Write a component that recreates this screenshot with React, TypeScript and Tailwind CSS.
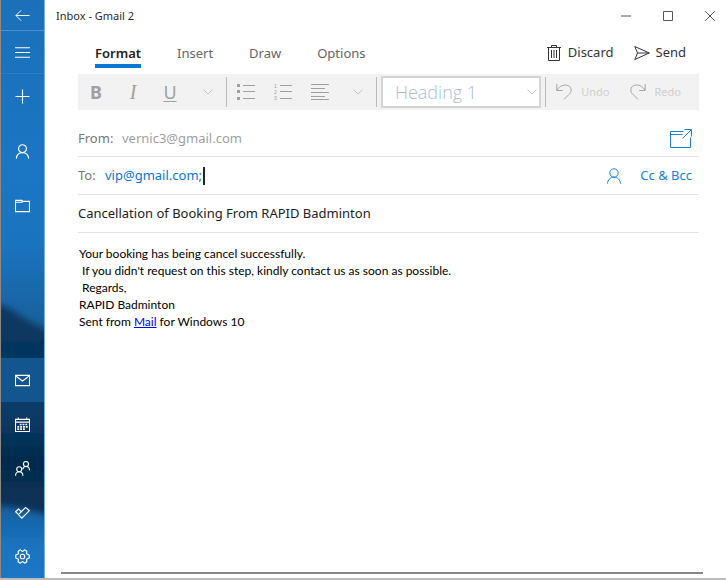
import { useState } from 'react'
import type { ReactNode } from 'react'

interface IconProps {
  className?: string
  children: ReactNode
}

function Icon({ className = 'size-4', children }: IconProps) {
  return (
    <svg viewBox="0 0 16 16" fill="none" stroke="currentColor" className={className} aria-hidden="true">
      {children}
    </svg>
  )
}

const personPath = (
  <>
    <circle cx="8" cy="5" r="4.2" />
    <path d="M1.4 15.6C1.8 11.8 4.3 9.2 8 9.2s6.2 2.6 6.6 6.4" />
  </>
)

const chevron = (
  <svg viewBox="0 0 10 6" fill="none" stroke="currentColor" className="h-1.5 w-2.5" aria-hidden="true">
    <path d="M.5.5 5 5 9.5.5" />
  </svg>
)

const topItems = [
  { label: 'New mail', icon: <path d="M8 .5v15M.5 8h15" /> },
  { label: 'Accounts', icon: personPath },
  { label: 'Folders', icon: <path d="M.5 1.5h7v2h-7zM7.5 2.5h8v11H.5v-10" /> },
]

const appItems = [
  { label: 'Mail', active: true, icon: <path d="M.5 2.5h15v11H.5zM.5 3 8 8.5 15.5 3" /> },
  {
    label: 'Calendar',
    icon: (
      <>
        <path d="M.5 2.5h15v13H.5zM.5 5.5h15M3.5.5v2M12.5.5v2" />
        <path d="M5 8h9M2.5 10.5H14M2.5 13H11" strokeWidth="1.8" strokeDasharray="2 1" />
      </>
    ),
  },
  {
    label: 'People',
    icon: (
      <>
        <circle cx="4.5" cy="8.8" r="2.7" />
        <path d="M.6 15.8c0-2.8 1.5-4.3 3.9-4.3s3.9 1.5 3.9 4.3" />
        <circle cx="11.7" cy="3.2" r="2.7" />
        <path d="M8.2 9c.3-2 1.5-3.1 3.5-3.1 2.3 0 3.7 1.5 3.8 4.1" />
      </>
    ),
  },
  { label: 'To Do', icon: <path d="m3.7 4.2 3 3-3 3-3-3zM6.7 7.2l4.6-4.6 4 3.500-8 8-3.600-3.900" /> },
  {
    label: 'Settings',
    icon: (
      <>
        <path
          strokeLinejoin="round"
          d="M5.700.9 8 2.600 10.300.9l2.400 1.400-.4 2.800 2.900 1.200v3.400l-2.900 1.200.4 2.800-2.400 1.400L8 13.400l-2.300 1.700-2.400-1.400.4-2.800L.8 9.700V6.300l2.900-1.200-.4-2.800z"
        />
        <circle cx="8" cy="8" r="2.4" />
      </>
    ),
  },
]

const tabs = ['Format', 'Insert', 'Draw', 'Options']

function Wallpaper() {
  return (
    <svg viewBox="0 0 44 578" preserveAspectRatio="none" className="absolute inset-0 size-full" aria-hidden="true">
      <defs>
        <linearGradient id="sky" x1="0" y1="0" x2="0" y2="1">
          <stop offset="0" stopColor="#1b70b9" />
          <stop offset=".3" stopColor="#1b76c4" />
          <stop offset=".43" stopColor="#1a73bd" />
          <stop offset=".55" stopColor="#19629f" />
        </linearGradient>
        <linearGradient id="hill" x1="0" y1="0" x2="0" y2="1">
          <stop offset="0" stopColor="#0c3a63" />
          <stop offset=".2" stopColor="#063660" />
          <stop offset=".5" stopColor="#083b68" />
          <stop offset=".72" stopColor="#052b4c" />
          <stop offset="1" stopColor="#0a365c" />
        </linearGradient>
        <linearGradient id="lake" x1="0" y1="0" x2="0" y2="1">
          <stop offset="0" stopColor="#155f9f" />
          <stop offset=".4" stopColor="#1b73bf" />
          <stop offset="1" stopColor="#1a7aca" />
        </linearGradient>
        <filter id="soft" x="-50%" y="-20%" width="200%" height="140%">
          <feGaussianBlur stdDeviation="3" />
        </filter>
      </defs>
      <rect width="44" height="578" fill="url(#sky)" />
      <path d="M-10 302 8 308l20 13 26 12v190h-64z" fill="url(#hill)" filter="url(#soft)" />
      <path d="M-10 506c24-2 40 6 64 10v90h-64z" fill="url(#lake)" filter="url(#soft)" />
    </svg>
  )
}

function Sidebar() {
  return (
    <nav
      aria-label="Mail"
      className="relative flex w-[45px] shrink-0 flex-col border-r border-l border-r-[#79addb] border-l-[#8a8a8a] text-white"
    >
      <Wallpaper />
      <div className="relative flex flex-1 flex-col">
        <button aria-label="Back" className="flex h-[31px] items-center justify-center border-b border-[#4a91cd]">
          <Icon className="size-[15px]"><path d="M15.5 8H1M6.5 2.5 1 8l5.5 5.5" /></Icon>
        </button>
        <button aria-label="Menu" className="flex h-[43px] items-center justify-center border-b border-[#2d7dc0]">
          <Icon className="size-[15px]"><path d="M0 3h16M0 8h16M0 13h16" strokeWidth="1.1" /></Icon>
        </button>
        <div className="flex flex-col gap-[11px]">
          {topItems.map(item => (
            <button key={item.label} aria-label={item.label} className="flex h-11 items-center justify-center">
              <Icon className="size-[15px] stroke-[1.2]">{item.icon}</Icon>
            </button>
          ))}
        </div>
        <div className="mt-auto flex flex-col">
          {appItems.map(item => (
            <button
              key={item.label}
              aria-label={item.label}
              className={`flex h-11 items-center justify-center ${item.active ? 'bg-[#13558f]' : ''}`}
            >
              <Icon className="size-[15px] stroke-[1.2]">{item.icon}</Icon>
            </button>
          ))}
        </div>
      </div>
    </nav>
  )
}

function TitleBar() {
  return (
    <header className="flex h-8 items-center justify-between pr-[11px] pl-[11px] text-[#2b2b2b]">
      <h1 className="text-[11px]">Inbox - Gmail 2</h1>
      <div className="flex gap-8 text-[#555]">
        <button aria-label="Minimize">
          <Icon className="size-2.5"><path d="M0 8h16" strokeWidth="1.6" /></Icon>
        </button>
        <button aria-label="Maximize">
          <Icon className="size-2.5"><path d="M.8.8h14.4v14.4H.8z" strokeWidth="1.6" /></Icon>
        </button>
        <button aria-label="Close">
          <Icon className="size-2.5"><path d="m.5.5 15 15m0-15-15 15" strokeWidth="1.6" /></Icon>
        </button>
      </div>
    </header>
  )
}

function TabRow() {
  const [active, setActive] = useState('Format')
  return (
    <div className="flex h-[42px] items-center justify-between pr-[13px] pl-[17px] text-[13px]">
      <div role="tablist" className="flex gap-9">
        {tabs.map(tab => (
          <button
            key={tab}
            role="tab"
            aria-selected={tab === active}
            onClick={() => setActive(tab)}
            className={
              tab === active
                ? 'border-b-4 border-[#0a76d6] pt-1 leading-[22px] font-semibold text-[#222]'
                : 'border-b-4 border-transparent pt-1 leading-[22px] text-[#666]'
            }
          >
            {tab}
          </button>
        ))}
      </div>
      <div className="flex gap-5 text-[#333]">
        <button className="flex items-center gap-1.5">
          <Icon>
            <path d="M1 2.5h14M5.5 2.5v-2h5v2M2.5 2.5v13h11v-13M5.5 5v8M8 5v8M10.5 5v8" />
          </Icon>
          Discard
        </button>
        <button className="flex items-center gap-1.5">
          <Icon><path d="M.8 1.5 15.3 8 .8 14.5 3.5 8zM3.5 8h11.8" /></Icon>
          Send
        </button>
      </div>
    </div>
  )
}

function Divider() {
  return <div className="h-[30px] w-px shrink-0 bg-[#b9b9b9]" />
}

function FormatBar() {
  return (
    <div role="toolbar" aria-label="Format" className="flex h-9 items-center bg-[#f2f2f2] text-[#a0a0a0]">
      <div className="flex w-[148px] shrink-0 items-center pl-[9px] text-[18px] leading-6">
        <button aria-label="Bold" className="w-[18px] font-bold">B</button>
        <button aria-label="Italic" className="ml-[19px] w-[18px] font-['Liberation_Serif'] text-[20px] italic">I</button>
        <button aria-label="Underline" className="ml-[19px] w-[18px] underline underline-offset-2">U</button>
        <button aria-label="More font options" className="ml-6 text-[#c4c4c4]">{chevron}</button>
      </div>
      <Divider />
      <div className="flex w-[149px] shrink-0 items-center pl-2.5">
        <button aria-label="Bullets">
          <svg viewBox="0 0 18 18" className="size-[18px]" fill="none" stroke="currentColor" aria-hidden="true">
            <path d="M6 2.5h12M6 8.5h12M6 15.5h12" />
            <path d="M0 2.5h3M0 8.5h3M0 15.5h3" strokeWidth="3" />
          </svg>
        </button>
        <button aria-label="Numbering" className="ml-[19px]">
          <svg
            viewBox="0 0 18 18"
            className="size-[18px] font-['Liberation_Sans']"
            fill="none"
            stroke="currentColor"
            aria-hidden="true"
          >
            <path d="M6 2.5h12M6 8.5h12M6 15.5h12" />
            <g fill="currentColor" stroke="none" fontSize="5">
              <text x="0" y="5">1</text>
              <text x="0" y="11">2</text>
              <text x="0" y="17">3</text>
            </g>
          </svg>
        </button>
        <button aria-label="Alignment" className="ml-[19px]">
          <svg viewBox="0 0 18 18" className="size-[18px]" fill="none" stroke="currentColor" aria-hidden="true">
            <path d="M0 1.5h18M0 5.5h14M0 9.5h18M0 13.5h14M0 16.5h18" />
          </svg>
        </button>
        <button aria-label="More paragraph options" className="ml-6 text-[#c4c4c4]">{chevron}</button>
      </div>
      <Divider />
      <div className="relative ml-1 h-8 min-w-0 flex-1 text-[#c4c4c4]">
        <select
          aria-label="Style"
          className="size-full appearance-none border-2 border-[#d4d4d4] bg-white pl-3 font-['Open_Sans'] text-[18px] font-light text-[#a9bcdb]"
        >
          <option>Heading 1</option>
          <option>Heading 2</option>
          <option>Normal</option>
        </select>
        <span className="pointer-events-none absolute inset-y-0 right-1 flex items-center">{chevron}</span>
      </div>
      <div className="ml-1 flex">
        <Divider />
      </div>
      <div className="flex shrink-0 gap-5 pr-[18px] pl-2.5 text-[11px] text-[#cfcfcf]">
        <button className="flex items-center gap-[9px]">
          <Icon className="size-4 text-[#a6a6a6]">
            <path d="M.8 0v6.5h6M.8 6.3C3 2.8 6 1 9.5 1 13 1 15.2 3.3 15.2 6c0 1.8-.8 3-2 4.2L8 15.5" />
          </Icon>
          Undo
        </button>
        <button className="flex items-center gap-[9px]">
          <Icon className="size-4 text-[#a6a6a6]">
            <path d="M15.2 0v6.5h-6M15.2 6.3C13 2.8 10 1 6.5 1 3 1 .8 3.3.8 6c0 1.8.8 3 2 4.2L8 15.5" />
          </Icon>
          Redo
        </button>
      </div>
    </div>
  )
}

function Envelope() {
  return (
    <div className="mt-2 text-[13px] text-[#777]">
      <div className="flex h-[39px] items-center border-b border-[#e3e3e3] pt-1">
        <label htmlFor="from" className="w-11 shrink-0">From:</label>
        <input id="from" readOnly defaultValue="vernic3@gmail.com" className="min-w-0 flex-1 text-[#a0a0a0] outline-none" />
        <button aria-label="Open in new window" className="mr-[7px] text-[#1883d7]">
          <svg viewBox="0 0 22 20" fill="none" stroke="currentColor" className="h-5 w-[22px]" aria-hidden="true">
            <path d="M13.5 2.5H.5v16h20V8.5M.5 5.5h12M12.5 9.5l9-9M14.5.5h7v7" />
          </svg>
        </button>
      </div>
      <div className="flex h-[38px] items-center border-b border-[#e3e3e3]">
        <label htmlFor="to" className="w-[27px] shrink-0">To:</label>
        <span className="mr-px text-[#0a76d6]">vip@gmail.com;</span>
        <input id="to" className="h-[18px] min-w-0 flex-1 border-l-2 border-[#222] outline-none" />
        <button aria-label="Choose contacts" className="text-[#1883d7]">
          <Icon>{personPath}</Icon>
        </button>
        <button className="mr-[7px] ml-[18px] text-[#1883d7]">Cc &amp; Bcc</button>
      </div>
      <div className="flex h-[38px] items-center border-b border-[#e3e3e3]">
        <input
          aria-label="Subject"
          defaultValue="Cancellation of Booking From RAPID Badminton"
          className="w-full text-[#222] outline-none"
        />
      </div>
    </div>
  )
}

function MessageBody() {
  return (
    <article className="mt-3 flex-1 px-px font-['Lato',sans-serif] text-[12px] leading-[17px] text-black">
      <p>Your booking has being cancel successfully.</p>
      <p className="pl-[3px]">If you didn't request on this step, kindly contact us as soon as possible.</p>
      <p className="pl-[3px]">Regards,</p>
      <p>RAPID Badminton</p>
      <p>
        Sent from <a href="#mail" className="text-[#0000ee] underline">Mail</a> for Windows 10
      </p>
    </article>
  )
}

export default function App() {
  return (
    <div className="flex min-h-screen flex-col border-b-2 border-[#bcbcbc] bg-white font-['Noto_Sans',sans-serif]">
      <div className="flex flex-1">
        <Sidebar />
        <main className="flex min-w-0 flex-1 flex-col">
          <TitleBar />
          <div className="flex flex-1 flex-col pr-[27px] pl-[33px]">
            <TabRow />
            <FormatBar />
            <Envelope />
            <MessageBody />
          </div>
          <div className="mr-[23px] mb-1 ml-4 h-[2px] bg-[#888]" />
        </main>
      </div>
    </div>
  )
}
